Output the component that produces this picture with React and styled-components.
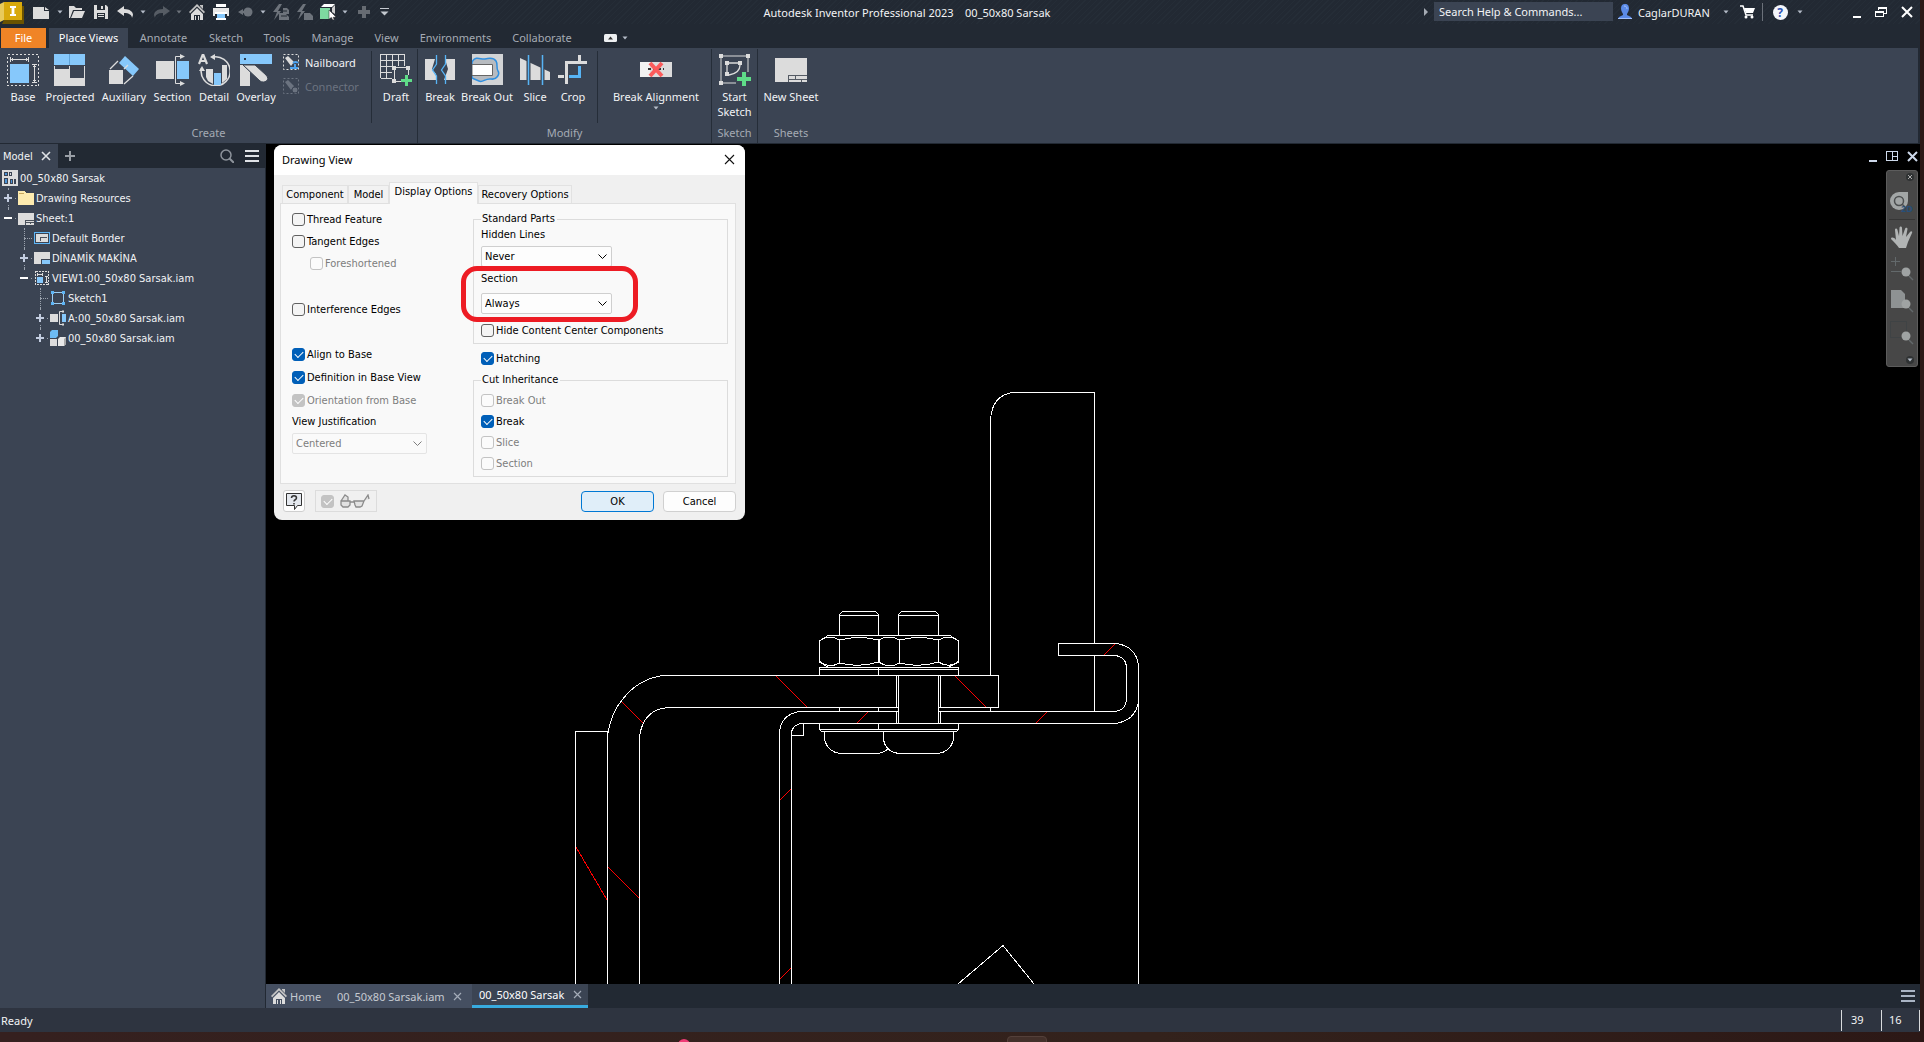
import React from 'react';
import styled, { createGlobalStyle, css } from 'styled-components';

const light = '#dcdcdc';
const blue = '#86c8fb';
const green = '#5fdc88';

const GlobalStyle = createGlobalStyle`
  * {
    box-sizing: border-box;
  }

  html, body, #root {
    height: 100%;
  }

  body {
    margin: 0;
    background: #2a1814;
    font-family: 'Noto Sans', 'Open Sans', sans-serif;
    font-size: 11px;
    color: #f2f3f5;
    overflow: hidden;
  }

  button, input, select {
    font: inherit;
    color: inherit;
  }

  svg {
    display: block;
    flex: none;
  }
`;

/* ---------- icons ---------- */

const Svg = ({ w = 16, h = w, crisp, children }) => (
  <svg width={w} height={h} viewBox={`0 0 ${w} ${h}`} fill="none" shapeRendering={crisp ? 'crispEdges' : undefined} aria-hidden="true">
    {children}
  </svg>
);

const Caret = ({ color = '#b4bcc8' }) => (
  <Svg w={6} h={4}><path d="M0.5 0.5h5L3 3.5z" fill={color} /></Svg>
);

const Cross = ({ size = 10, color = '#a4acb8', width = 1.6 }) => (
  <Svg w={size}><path d={`M1 1L${size - 1} ${size - 1}M${size - 1} 1L1 ${size - 1}`} stroke={color} strokeWidth={width} /></Svg>
);

const Burger = ({ color }) => (
  <Svg w={14} h={12} crisp><path d="M0 1h14M0 6h14M0 11h14" stroke={color} strokeWidth="2" /></Svg>
);

const LogoIcon = () => (
  <Svg w={24} h={24}>
    <path d="M0 4l4-2v18l-4 2z" fill="#e8ca5a" />
    <path d="M4 20h18V6h2v18H2z" fill="#6b5300" />
    <path d="M4 2h18v18H4z" fill="#d8a90c" />
    <path d="M10 6h6v2h-1.6v6H16v2h-6v-2h1.6V8H10z" fill="#fff" />
  </Svg>
);

const NewIcon = () => <Svg><path d="M0 3h11v4h5v8H0zM12 3l4 3h-4z" fill={light} /></Svg>;

const OpenIcon = () => (
  <Svg><path d="M0 2h5l2 2h6v2H4L1 14H0z" fill={light} /><path d="M5 7h11l-3 7H2z" fill={light} /></Svg>
);

const SaveIcon = () => (
  <Svg w={14}>
    <path d="M0 0h12l2 2v12H0z" fill={light} />
    <path d="M3 0h8v5H3zM3 8h8v6H3z" fill="#232a33" />
    <path d="M7 1h2v3H7zM4 9h6v1H4zM4 11h6v1H4z" fill={light} />
  </Svg>
);

const UndoIcon = () => (
  <Svg w={17} h={14}><path d="M0 6l7-5v3c6 0 9 3 9 6l-1 3c0-3-3-5-8-5v3z" fill={light} /></Svg>
);

const RedoIcon = () => (
  <Svg w={17} h={14}><path d="M17 6l-7-5v3c-6 0-9 3-9 6l1 3c0-3 3-5 8-5v3z" fill="#565c64" /></Svg>
);

const HomeIcon = () => (
  <Svg>
    <path d="M8 0l8 8-1.200 1.200L8 2.400 1.200 9.200 0 8zM11 1h3v4l-3-3z" fill="#c4c4c4" />
    <path d="M2 10l6-6 6 6v6h-3v-5H5v5H2z" fill={light} />
    <path d="M6 12h1v4H6zM9 12h1v4H9z" fill={light} />
  </Svg>
);

const PrintIcon = () => (
  <Svg>
    <path d="M3 0h10v3H3z" fill="#fff" />
    <path d="M0 4h16v8h-2V8H2v4H0z" fill="#e8e8e8" />
    <path d="M2 9h12M3 15h10" stroke="#fff" strokeWidth="2" />
    <path d="M4 10h8v4H4z" fill={blue} />
  </Svg>
);

const PointIcon = () => (
  <Svg w={15} h={10}><circle cx="10" cy="5" r="4.5" fill="#6d737b" /><path d="M0 5l5-3v2h3v2H5v2z" fill="#6d737b" /></Svg>
);

const BoltAllIcon = () => (
  <Svg>
    <path d="M6 0L0 8h4l-3 8 7-9H5l4-7z" fill="#6d737b" />
    <path d="M10 4h4l2 2v4h-6zM6 9h6l4 4v3H6z" fill="#6d737b" />
    <path d="M8 12h6M10 7h4" stroke="#232a33" />
  </Svg>
);

const BoltIcon = () => (
  <Svg>
    <path d="M6 0L0 8h4l-3 8 7-9H5l4-7z" fill="#6d737b" />
    <path d="M7 9h6l3 3v4H7z" fill="#6d737b" />
  </Svg>
);

const CubeIcon = () => (
  <Svg>
    <path d="M0 4h10v11H0z" fill="#7ed9a0" />
    <path d="M1 3l3-3h11l-3 3z" fill="#fff" />
    <path d="M12 4l3-3v9l-3-2z" fill="#d0d0d0" />
    <path d="M9 6l7 7-3 .4 1.4 2.2-1.6.4-1.4-2.6L9 15z" fill="#fff" stroke="#222" strokeWidth=".5" />
  </Svg>
);

const PlusIcon = ({ size = 12, color = '#666b72', width = 4 }) => (
  <Svg w={size}><path d={`M${size / 2} 0v${size}M0 ${size / 2}h${size}`} stroke={color} strokeWidth={width} /></Svg>
);

const MoreIcon = () => (
  <Svg w={9} h={8}><path d="M0 .5h9" stroke="#c4c9d0" /><path d="M.5 3.5h8l-4 4z" fill="#c4c9d0" /></Svg>
);

const UserIcon = () => (
  <Svg w={14} h={16}>
    <path d="M7 0c3 0 4 2 4 4.500S9.500 9 9 10v1l4 2 1 2H0l1-2 4-2v-1C4.500 9 3 7 3 4.500S4 0 7 0z" fill="#5b8be8" />
    <path d="M6 2c2 0 3 1 3 3" stroke="#a6c4ff" />
    <path d="M0 14.500h14" stroke="#9fc0ff" />
  </Svg>
);

const CartIcon = () => (
  <Svg w={15} h={14}>
    <path d="M0 1h3l3 9h7" stroke="#fff" strokeWidth="1.500" />
    <path d="M4 3h11l-2 5H6z" fill="#fff" />
    <circle cx="6" cy="12" r="1.500" fill="#fff" /><circle cx="12" cy="12" r="1.500" fill="#fff" />
  </Svg>
);

const BaseIcon = () => (
  <Svg w={32} crisp>
    <path d="M.5.5h31v31H.5z" stroke={light} strokeDasharray="2 2" />
    <path d="M3 10h19v19H3z" fill={blue} />
    <path d="M3 5.5h19M3.500 3v5M21.500 3v5M27.500 10v19M25 10.500h5M25 28.500h5M5.500 4v3M19.500 4v3M26 12.500h3M26 26.500h3" stroke={light} />
  </Svg>
);

const ProjectedIcon = () => (
  <Svg w={32} crisp>
    <path d="M0 0h31v11H0z" fill={blue} />
    <path d="M15.500 0v11" stroke="#5fa2d8" />
    <path d="M.500 12v20M15.500 12v12M30.500 12v12" stroke={light} />
    <path d="M0 15h15v9h16v8H0z" fill={light} />
  </Svg>
);

const AuxiliaryIcon = () => (
  <Svg w={30} h={32}>
    <path d="M0 16h14v14H0z" fill={light} />
    <path d="M16 2l14 13-6 7L10 9z" fill={blue} />
    <path d="M1 15l8-8M15 15l4-4M15 30l9-8" stroke={light} strokeWidth="1.300" />
  </Svg>
);

const SectionIcon = () => (
  <Svg w={33} h={32}>
    <path d="M0 7h18v18H0z" fill={light} />
    <path d="M21 7h12v18H21z" fill={blue} />
    <path d="M25 2.500h-5.500v27H25" stroke={light} />
    <path d="M24 0l5 2.500L24 5zM24 27l5 2.500-5 2.500z" fill={light} />
  </Svg>
);

const DetailIcon = () => (
  <Svg w={32}>
    <path d="M1 10L5 0l4 10M3 7h5" stroke={light} strokeWidth="2.200" />
    <path d="M14 3.200A14.500 14.500 0 1 1 3.500 14" stroke={light} strokeWidth="1.600" />
    <path d="M12 3l5-3v6zM1 17l3-5 3 5z" fill={light} />
    <path d="M8 15h7v15l-5-3-2-4z" fill={light} />
    <path d="M16 19h7v12h-7z" fill={blue} />
    <path d="M24 11h5v14l-5 4z" fill={light} />
  </Svg>
);

const OverlayIcon = () => (
  <Svg w={32}>
    <path d="M0 0h32v10H0z" fill={blue} />
    <path d="M4 4h2v2H4z" fill="#2d3a4c" />
    <path d="M0 11h3l7 7v14H0z" fill={light} />
    <path d="M3 11h12l11 10c5 5-2 9-6 6z" fill={light} stroke="#3b4453" />
  </Svg>
);

const NailboardIcon = ({ dim }) => (
  <Svg>
    <path d="M.500.500h15v15H.500z" stroke={dim ? '#6b7380' : light} strokeDasharray="2 2" />
    <path d="M2 4l3-2 6 6-3 4z" fill={dim ? '#6b7380' : light} />
    {dim
      ? <circle cx="12" cy="12" r="3" fill="#6b7380" stroke="#3b4453" />
      : <path d="M7 14h8M10 9c3-2 4 0 5-1M12 10v4" stroke="#4da3f0" strokeWidth="2" />}
  </Svg>
);

const DraftIcon = () => (
  <Svg w={32} crisp>
    <path d="M.500 24V.500H24V12M.500 24.500H12M6.500 0v24M12.500 0v14M18.500 0v12M0 6.500h24M0 12.500h12M0 18.500h12" stroke={light} />
    <path d="M14.500 13.500h14v14h-14z" stroke={light} />
    <path d="M12 12h4v4h-4zM26 12h4v4h-4zM12 25h4v4h-4z" fill={light} />
    <path d="M21 21h11v11H21z" fill="#3b4453" />
    <path d="M26.500 21v11M21 26.500h11" stroke={green} strokeWidth="3" />
  </Svg>
);

const BreakIcon = () => (
  <Svg w={30} h={32}>
    <path d="M0 5h10l-3 10 4 5v6H0zM20 5h10v21H19l4-11z" fill={light} />
    <path d="M11.500 1v9l-4 6 4 6v8M20.500 1v9l-4 6 4 6v8" stroke="#57b4f5" strokeWidth="1.300" />
  </Svg>
);

const BreakOutIcon = () => (
  <Svg w={31} h={31}>
    <path d="M0 0h31v31H0z" fill="#d2d4d6" />
    <path d="M0 8c4-7 9-2 13-3s9-1 11 2 0 7 2 10-1 9-7 8-8 4-12 2-5-2-7-3z" fill="#b7bbc0" stroke="#2f8fe0" strokeWidth="1.500" />
    <path d="M0 10.500h20.500v11H0z" fill="#fff" stroke="#666" />
  </Svg>
);

const SliceIcon = () => (
  <Svg w={30} h={32}>
    <path d="M0 4l30 14v8H0z" fill={light} />
    <path d="M8.500 1v30M22.500 1v30" stroke="#3b4453" strokeWidth="4" />
    <path d="M8.500 1v30M22.500 1v30" stroke="#57b4f5" strokeWidth="1.500" />
  </Svg>
);

const CropIcon = () => (
  <Svg w={30} h={32} crisp>
    <path d="M0 22h6M8.500 30V9M7 8.500h22M21.500 1v6" stroke={light} strokeWidth="3" />
    <path d="M21.500 12v12M11 22.500h12" stroke="#57b4f5" strokeWidth="3" />
  </Svg>
);

const BreakAlignIcon = () => (
  <Svg w={32}>
    <path d="M0 8h32v15H0z" fill={light} />
    <path d="M0 8h10v15H0z" fill="#f2f2f2" />
    <path d="M8 15h16" stroke="#333" strokeWidth="2" strokeDasharray="3 2" />
    <path d="M10 9l12 13M22 9L10 22" stroke="#fb5b5b" strokeWidth="4" />
  </Svg>
);

const StartSketchIcon = () => (
  <Svg w={32}>
    <path d="M2 2h27v16M2 2v27h15" stroke={light} />
    <path d="M0 0h4v4H0zM27 0h4v4h-4zM0 27h4v4H0zM6 7h4v4H6zM19 7h4v4h-4zM6 18h4v4H6z" fill={light} />
    <path d="M8 18V9h11M21 11c0 6-5 9-11 10" stroke={light} strokeWidth="1.300" />
    <path d="M25 18v14M18 25h14" stroke={green} strokeWidth="4" />
  </Svg>
);

const NewSheetIcon = () => (
  <Svg w={32} crisp>
    <path d="M0 4h32v24H0z" fill={light} />
    <path d="M13 21.500h19M13.500 21v7M13 25.500h19M20.500 22v3M26.500 25v3" stroke="#555b64" />
  </Svg>
);

const RootIcon = () => (
  <Svg crisp>
    <path d="M0 0h16v16H0z" fill={light} />
    <path d="M2.500 2.500h3v3h-3zM2.500 8.500h3v5h-3zM8.500 9.500h2v4h-2zM12.500 9.500h1v4h-1z" fill="#4b93d6" stroke="#3b4453" />
    <path d="M7.500 2.500h2v3h-2z" stroke="#3b4453" />
  </Svg>
);
const FolderIcon = () => <Svg crisp><path d="M0 1h6l2 2h8v12H0z" fill="#fdebaf" /><path d="M1 3.500h5" stroke="#c8a75c" /></Svg>;
const SheetIcon = () => <Svg crisp><path d="M0 3h16v12H0z" fill={light} /><path d="M7 10.500h9M7.500 10v5M7 12.500h9M12.500 12v2" stroke="#4a515c" /></Svg>;
const BorderIcon = () => (
  <Svg crisp><path d="M.500 2.500h15v11H.500z" stroke="#5eb5f5" /><path d="M2 4h12v8H2z" fill={light} /><path d="M6.500 11V7.500H13" stroke="#4a515c" /></Svg>
);
const TitleBlockIcon = () => <Svg crisp><path d="M0 2h16v12H0z" fill={light} /><path d="M7 9h9v5H7z" fill={blue} stroke="#3b4453" /></Svg>;
const ViewIcon = () => (
  <Svg crisp>
    <path d="M1.500 1.500h13v13h-13z" stroke={light} strokeDasharray="2 1" />
    <path d="M3 7h6v6H3z" fill={blue} />
    <path d="M3 4.500h6M3.500 3v3M8.500 3v3M12.500 6v7M11 6.500h3M11 12.500h3" stroke={light} />
  </Svg>
);
const SketchIcon = () => (
  <Svg crisp><path d="M2.500 2.500h11v11h-11z" stroke="#9ccdf2" /><path d="M1 1h3v3H1zM12 1h3v3h-3zM1 12h3v3H1zM12 12h3v3h-3z" fill="#5eb5f5" /></Svg>
);
const SectionSmallIcon = () => (
  <Svg><path d="M0 4h8v8H0z" fill={light} /><path d="M12 4h4v8h-4z" fill={blue} /><path d="M14 1.500H9.500v13H14M13 0v3M13 13v3" stroke={light} /></Svg>
);
const AssemblyIcon = () => (
  <Svg>
    <path d="M0 2l2-2h6v6l-2 2H0z" fill="#6dbcf5" /><path d="M0 9h7v7H0z" fill={light} />
    <path d="M8 9l2-2h6v7l-2 2H8z" fill="#e8e8e8" /><path d="M14 16V9l2-2v7z" fill="#a8a8a8" />
  </Svg>
);
const SearchIcon = () => (
  <Svg w={14}><circle cx="6" cy="6" r="5" stroke="#8d939b" strokeWidth="1.500" /><path d="M9.500 9.500L14 14" stroke="#8d939b" strokeWidth="2" /></Svg>
);
const MinimizeIcon = ({ color = '#fff' }) => <Svg w={8} h={12} crisp><path d="M0 11h8" stroke={color} strokeWidth="2" /></Svg>;
const RestoreIcon = () => (
  <Svg w={12} crisp><path d="M3.500 4V1.500h8v6H9" stroke="#fff" /><path d="M3 2h9M0 5.500h9" stroke="#fff" strokeWidth="2" /><path d="M.500 5.500h8v5h-8z" stroke="#fff" /></Svg>
);
const TileIcon = () => (
  <Svg w={12} h={12} crisp><path d="M.500 1.500h11v9H.500zM6.500 1v10M6 6.500h6" stroke="#cdd8ea" /></Svg>
);
const Chevron = () => <Svg w={9} h={6}><path d="M.500.500l4 4 4-4" stroke="currentColor" /></Svg>;

const WheelIcon = () => (
  <Svg w={24}>
    <path d="M9 1h9v9a9 9 0 1 1-9-9z" fill="#a2a6a6" />
    <circle cx="9" cy="10" r="4.500" stroke="#4c4f50" strokeWidth="1.500" />
    <path d="M12 13l3 3" stroke="#4c4f50" strokeWidth="1.500" />
    <text x="11" y="21" fontSize="9" fontWeight="700" fill="#27507a">2D</text>
  </Svg>
);
const HandIcon = () => (
  <Svg w={22} h={23}>
    <path d="M8 22c-2-3-5-6-8-9 0-2 3-2 5 1L4 4c0-2 2-2 2.500 0L8 10 8.500 2c0-2 2.500-2 2.500 0l.5 8L14 3c.5-2 2.500-1.500 2.500 0L15 11l4-5c1-1.500 3-.500 2 1l-4 9-2 6z" fill="#b1b4b4" />
  </Svg>
);
const Lens = () => (
  <>
    <path d="M19 19l4 4" stroke="#63696b" strokeWidth="1.500" />
    <circle cx="16" cy="15" r="4.500" fill="#9fa3a3" />
  </>
);
const ZoomIcon = () => <Svg w={24}><path d="M5.500 0v9M1 4.500h9M1 14.500h10" stroke="#63696b" /><Lens /></Svg>;
const ZoomPageIcon = () => <Svg w={24}><path d="M1 1h10l4 4v14H1z" fill="#8e9293" /><Lens /></Svg>;
const ZoomWindowIcon = () => <Svg w={24}><path d="M.500.500h16v16H.500z" stroke="#3f4345" /><Lens /></Svg>;

const GlassesIcon = () => (
  <Svg w={30} h={14}>
    <path d="M1 7h9v4l-2 2H3l-2-2zM14 7h10l-2 5-2 1h-4l-1-2zM10 8h4M1 7l4-6 3 2v4M24 7l4-6 1 4" fill="#e2e2e2" stroke="#8b8b8b" strokeWidth="1.300" />
  </Svg>
);
const HelpBubble = () => (
  <Svg w={17} h={17}>
    <path d="M.500.500h15v12h-4l-3 4v-4h-8z" fill="#e4e8ee" stroke="#333" />
    <path d="M5.500 5c0-3 5-3 5 0 0 2-2.500 1.500-2.500 3.500M8 10v1.500" stroke="#333" strokeWidth="1.500" />
  </Svg>
);

/* ---------- window frame ---------- */

const Desktop = styled.div`
  height: 100vh;
  display: flex;
  flex-direction: column;
  background: linear-gradient(90deg, #35201f, #33221c 60%, #2c1816);
`;

const AppWindow = styled.div`
  flex: 1;
  min-height: 0;
  margin-right: 4px;
  display: flex;
  flex-direction: column;
  background: #222933;
`;

const Taskbar = styled.div`
  height: 10px;
  position: relative;
  overflow: hidden;
`;

const TaskDot = styled.span`
  position: absolute;
  left: 678px;
  top: 7px;
  width: 12px;
  height: 12px;
  border-radius: 50%;
  background: #ef3b76;
`;

const TaskApp = styled(TaskDot)`
  left: 1007px;
  top: 4px;
  width: 40px;
  height: 40px;
  border-radius: 4px;
  background: #43302a;
  border: 1px solid #54403a;
`;

const TitleBar = styled.header`
  height: 24px;
  display: flex;
  align-items: center;
  background: repeating-linear-gradient(135deg, #222933 0 3px, #252d37 3px 4px);
`;

const QuickAccess = styled.div`
  width: 390px;
  display: flex;
  align-items: center;
`;

const QuickButton = styled.button`
  width: ${props => props.$w}px;
  height: 22px;
  padding: 0;
  border: 0;
  background: none;
  display: flex;
  align-items: center;
  justify-content: center;
`;

const WindowTitle = styled.h1`
  flex: 1;
  margin: 0;
  font-size: 11px;
  font-weight: 400;
  text-align: center;
  white-space: pre;
`;

const Account = styled.div`
  width: 496px;
  display: flex;
  align-items: center;
  white-space: nowrap;
`;

const HelpSearch = styled.input`
  width: 179px;
  height: 19px;
  margin: 0 5px 2px 6px;
  padding: 0 5px;
  border: 0;
  background: #3b4453;
  outline: none;

  &::placeholder {
    color: #f2f3f5;
    opacity: 1;
  }
`;

const UserButton = styled.button`
  width: 114px;
  padding: 0;
  border: 0;
  background: none;
  display: flex;
  align-items: center;
  gap: 6px;

  svg:last-child {
    margin-left: auto;
    margin-right: 3px;
  }
`;

const Divider = styled.span`
  width: 1px;
  height: 18px;
  background: #6b717a;
`;

const HelpBadge = styled.span`
  width: 15px;
  height: 15px;
  border-radius: 50%;
  background: #f4f6fa;
  color: #2c53b5;
  font-size: 12px;
  font-weight: 700;
  line-height: 15px;
  text-align: center;
`;

const WindowButtons = styled.div`
  margin-left: auto;
  display: flex;
  align-items: center;
  gap: 14px;
  padding-right: 7px;
`;

const IconButton = styled.button`
  padding: 0;
  border: 0;
  background: none;
  display: flex;
  align-items: center;
`;

/* ---------- ribbon ---------- */

const RibbonTabs = styled.nav`
  height: 24px;
  display: flex;
  align-items: flex-end;
  padding-left: 1px;
`;

const RibbonTab = styled.button`
  height: 20px;
  width: ${props => props.$w}px;
  padding: 0;
  border: 0;
  line-height: 20px;
  white-space: nowrap;
  background: none;
  color: #a5abb4;

  ${props => props.$active && css`
    background: #3b4453;
    color: #fff;
  `}

  ${props => props.$file && css`
    background: #f08426;
    color: #fff;
    margin-right: 3px;
  `}
`;

const Collapse = styled.button`
  height: 20px;
  margin-left: 22px;
  padding: 0;
  border: 0;
  background: none;
  display: flex;
  align-items: center;
  gap: 5px;
`;

const Ribbon = styled.section`
  height: 96px;
  display: flex;
  background: #3b4453;
  border-bottom: 1px solid #222933;
  margin-right: 2px;
`;

const Group = styled.div`
  width: ${props => props.$w}px;
  display: flex;
  flex-direction: column;
  border-right: ${props => (props.$last ? '0' : '1px solid #252d38')};
  margin-top: 1px;
`;

const GroupBody = styled.div`
  flex: 1;
  display: flex;
  padding-left: ${props => (props.$center ? 0 : 4)}px;
  justify-content: ${props => (props.$center ? 'center' : 'flex-start')};
`;

const GroupName = styled.div`
  height: 19px;
  line-height: 17px;
  text-align: center;
  color: #a5abb4;
`;

const Tool = styled.button`
  flex: none;
  width: ${props => props.$w || 38}px;
  padding: 5px 0 0;
  border: 0;
  background: none;
  display: flex;
  flex-direction: column;
  align-items: center;
  line-height: 15px;
  white-space: nowrap;

  > svg {
    margin-top: 2px;
  }
`;

const ToolIcon = styled.span`
  height: 32px;
  margin-bottom: 3px;
`;

const Small = styled.div`
  width: 87px;
  padding-top: 4px;
`;

const SmallTool = styled.button`
  height: 24px;
  padding: 0 0 6px 4px;
  border: 0;
  background: none;
  display: flex;
  align-items: center;
  gap: 6px;

  &:disabled {
    color: #6b7380;
  }
`;

const Rule = styled.span`
  width: 1px;
  height: 72px;
  margin: 2px 5px 0;
  background: #252d38;
`;

/* ---------- model browser ---------- */

const Workspace = styled.div`
  flex: 1;
  min-height: 0;
  display: flex;
`;

const Browser = styled.aside`
  width: 266px;
  display: flex;
  flex-direction: column;
  background: #3b4453;
  border-right: 1px solid #222933;
  font-family: 'DejaVu Sans Condensed', 'Noto Sans', sans-serif;
  font-size: 11px;
`;

const BrowserHead = styled.div`
  height: 24px;
  display: flex;
  align-items: center;
  background: #222933;
`;

const BrowserTab = styled.div`
  width: 58px;
  height: 24px;
  padding: 0 7px 0 3px;
  display: flex;
  align-items: center;
  justify-content: space-between;
  background: #3b4453;
`;

const BrowserTools = styled.div`
  margin-left: auto;
  padding-right: 6px;
  display: flex;
  align-items: center;
  gap: 11px;
`;

const Tree = styled.ul`
  margin: 0;
  padding: 0;
  list-style: none;
`;

const TreeRow = styled.li`
  height: 20px;
  padding-left: ${props => props.$indent}px;
  display: flex;
  align-items: center;
  gap: 2px;
  white-space: nowrap;
`;

const Branch = styled.span`
  position: relative;
  width: 16px;
  height: 20px;
  display: flex;
  align-items: center;
  justify-content: center;

  &::before {
    content: '';
    position: absolute;
    left: 8px;
    top: 0;
    height: ${props => (props.$end ? 10 : 20)}px;
    border-left: 1px dotted #9aa2ad;
  }

  &::after {
    content: '';
    position: absolute;
    left: 8px;
    top: 10px;
    width: 8px;
    border-top: 1px dotted #9aa2ad;
  }
`;

const Toggle = styled.button`
  position: relative;
  z-index: 1;
  width: 12px;
  height: 14px;
  padding: 0;
  border: 0;
  background: #3b4453;
  display: flex;
  align-items: center;
  justify-content: center;
`;

/* ---------- drawing area ---------- */

const Documents = styled.main`
  flex: 1;
  min-width: 0;
  display: flex;
  flex-direction: column;
`;

const Canvas = styled.div`
  position: relative;
  flex: 1;
  min-height: 0;
  background: #000;
  overflow: hidden;
`;

const Sheet = styled.svg`
  width: 100%;
  height: 100%;
`;

const SheetButtons = styled.div`
  position: absolute;
  top: 6px;
  right: 2px;
  display: flex;
  align-items: center;
  gap: 9px;
`;

const NavBar = styled.div`
  position: absolute;
  top: 26px;
  right: 2px;
  width: 32px;
  padding: 2px 3px;
  border: 1px solid #5c5c5c;
  border-radius: 3px;
  background: #474747;
  display: flex;
  flex-direction: column;
  align-items: center;
`;

const NavCap = styled.button`
  align-self: flex-end;
  width: 8px;
  height: 8px;
  margin: ${props => (props.$end ? '7px 0 0' : '0 0 6px')};
  padding: 0;
  border: 0;
  border-radius: 50%;
  background: #2f3233;
  display: flex;
  align-items: center;
  justify-content: center;
`;

const NavTool = styled(IconButton)`
  height: 32px;
`;

const NavRule = styled.hr`
  width: 26px;
  margin: 0 0 1px;
  border: 0;
  border-top: 1px solid #363636;
`;

const DocTabs = styled.div`
  height: 24px;
  display: flex;
  align-items: center;
  background: #222933;
`;

const DocTab = styled.div`
  height: 24px;
  width: ${props => props.$w}px;
  padding: 0 10px 0 8px;
  display: flex;
  align-items: center;
  gap: 3px;
  white-space: nowrap;
  color: #c6cad1;
  background: #454f61;

  ${props => props.$home && css`
    padding: 0 0 0 5px;
  `}

  ${props => props.$active && css`
    padding: 0 6px 0 7px;
    color: #fff;
    background: #3b4453;
    border-bottom: 3px solid #38abdf;
  `}

  button {
    margin-left: auto;
  }
`;

const DocMenu = styled(IconButton)`
  margin-left: auto;
  margin-right: 5px;
`;

const StatusBar = styled.footer`
  height: 24px;
  display: flex;
  align-items: center;
  padding-left: 1px;
  background: #2e3440;
`;

const StatusText = styled.span`
  flex: 1;
`;

const StatusCell = styled.span`
  width: ${props => props.$w}px;
  height: 21px;
  padding-left: ${props => props.$pad}px;
  line-height: 20px;
  border-left: 1px solid #d9dbde;
`;

/* ---------- dialog ---------- */

const Dialog = styled.section`
  position: absolute;
  left: 8px;
  top: 1px;
  width: 471px;
  height: 375px;
  border-radius: 8px;
  overflow: hidden;
  background: #f0f0f0;
  color: #000;
  font-family: 'DejaVu Sans Condensed', 'Noto Sans', sans-serif;
  font-size: 11px;
`;

const DialogHead = styled.div`
  height: 30px;
  padding: 0 10px 2px 8px;
  display: flex;
  align-items: center;
  justify-content: space-between;
  background: #fff;
  font-family: 'Noto Sans', 'Open Sans', sans-serif;
`;

const DialogBody = styled.div`
  padding: 7px 9px 0 6px;
`;

const DialogTabs = styled.div`
  height: 21px;
  display: flex;
  align-items: flex-end;
  padding-left: 2px;
`;

const DialogTab = styled.button`
  position: relative;
  width: ${props => props.$w}px;
  height: ${props => (props.$active ? 22 : 18)}px;
  margin-bottom: ${props => (props.$active ? -1 : 0)}px;
  padding: 0 0 ${props => (props.$active ? 5 : 0)}px;
  border: 1px solid #e2e2e2;
  border-bottom: 0;
  background: ${props => (props.$active ? '#f9f9f9' : '#f2f2f2')};
  white-space: nowrap;
`;

const Page = styled.div`
  height: 281px;
  display: grid;
  grid-template-columns: 181px 255px;
  padding: 0 7px 0 11px;
  border: 1px solid #e0e0e0;
  background: #f9f9f9;
`;

const Column = styled.div`
  padding-top: ${props => props.$top}px;
`;

const CheckRow = styled.label`
  height: ${props => props.$h || 22}px;
  margin-left: ${props => props.$indent || 0}px;
  margin-top: ${props => props.$gap || 0}px;
  display: flex;
  align-items: center;
  gap: 2px;
  white-space: nowrap;
  color: ${props => (props.$off ? '#7d7d7d' : '#000')};
`;

const Box = styled.input.attrs({ type: 'checkbox' })`
  appearance: none;
  position: relative;
  width: 13px;
  height: 13px;
  margin: 0;
  flex: none;
  border: 1px solid #616161;
  border-radius: 3px;
  background: #f4f4f4;

  &:disabled {
    border-color: #c3c3c3;
    background: #fbfbfb;
  }

  &:checked {
    border-color: #005fb8;
    background: #005fb8;
  }

  &:checked:disabled {
    border-color: #c3c3c3;
    background: #c3c3c3;
  }

  &:checked::after {
    content: '';
    position: absolute;
    left: 2px;
    top: 2px;
    width: 7px;
    height: 4px;
    border: solid #fff;
    border-width: 0 0 1px 1px;
    transform: rotate(-45deg);
  }
`;

const FieldLabel = styled.label`
  display: block;
  height: 16px;
  line-height: 16px;
  margin-top: ${props => props.$top || 0}px;
  margin-bottom: ${props => props.$gap}px;
`;

const SelectWrap = styled.div`
  position: relative;
  width: ${props => props.$w}px;
  height: 21px;
  color: ${props => (props.$off ? '#7d7d7d' : '#000')};

  svg {
    position: absolute;
    right: 5px;
    top: 8px;
    pointer-events: none;
  }
`;

const Select = styled.select`
  appearance: none;
  width: 100%;
  height: 21px;
  padding: 0 3px;
  border: 1px solid #cfcfcf;
  border-radius: 2px;
  background: #fdfdfd;

  &:disabled {
    opacity: 1;
    border-color: #e4e4e4;
    background: #fafafa;
  }
`;

const Frame = styled.fieldset`
  margin: 0;
  min-width: 0;
  padding: ${props => props.$top || 0}px 0 2px 7px;
  border: 1px solid #dcdcdc;

  legend {
    height: 16px;
    line-height: 16px;
    padding: 0 2px 0 1px;
  }
`;

const DialogFoot = styled.div`
  height: 34px;
  display: flex;
  align-items: center;
  padding-left: 3px;
`;

const HelpButton = styled.button`
  width: 22px;
  height: 22px;
  margin-right: 10px;
  padding: 0 0 0 2px;
  border: 1px solid #cfcfcf;
  border-radius: 3px;
  background: #fdfdfd;
`;

const Preview = styled.label`
  width: 62px;
  height: 22px;
  padding-left: 5px;
  margin-right: auto;
  border: 1px solid #dcdcdc;
  display: flex;
  align-items: center;
  gap: 6px;
`;

const PushButton = styled.button`
  width: 73px;
  height: 21px;
  margin-left: 9px;
  padding: 0;
  border: 1px solid ${props => (props.$primary ? '#0078d4' : '#d0d0d0')};
  border-radius: 4px;
  background: ${props => (props.$primary ? '#e0eef9' : '#fdfdfd')};
`;

const Callout = styled.div`
  position: absolute;
  left: 195px;
  top: 122px;
  width: 177px;
  height: 56px;
  border: 5px solid #ed1c24;
  border-radius: 16px;
  pointer-events: none;
`;

/* ---------- parts ---------- */

const tabs = [
  ['Annotate', 71], ['Sketch', 54], ['Tools', 48], ['Manage', 63],
  ['View', 45], ['Environments', 93], ['Collaborate', 80],
];

const tree = [
  { level: 1, label: 'Drawing Resources', icon: <FolderIcon />, mark: 'plus' },
  { level: 1, label: 'Sheet:1', icon: <SheetIcon />, mark: 'minus', end: true },
  { level: 2, label: 'Default Border', icon: <BorderIcon /> },
  { level: 2, label: 'DİNAMİK MAKİNA', icon: <TitleBlockIcon />, mark: 'plus' },
  { level: 2, label: 'VIEW1:00_50x80 Sarsak.iam', icon: <ViewIcon />, mark: 'minus', end: true },
  { level: 3, label: 'Sketch1', icon: <SketchIcon /> },
  { level: 3, label: 'A:00_50x80 Sarsak.iam', icon: <SectionSmallIcon />, mark: 'plus' },
  { level: 3, label: '00_50x80 Sarsak.iam', icon: <AssemblyIcon />, mark: 'plus', end: true },
];

const RibbonTool = ({ icon, label, w, children }) => (
  <Tool $w={w}>
    <ToolIcon>{icon}</ToolIcon>
    {label}
    {children}
  </Tool>
);

const Check = ({ label, checked, off, indent, gap, h }) => (
  <CheckRow $off={off} $indent={indent} $gap={gap} $h={h}>
    <Box defaultChecked={checked} disabled={off} />
    {label}
  </CheckRow>
);

const Choice = ({ id, value, w, off }) => (
  <SelectWrap $w={w} $off={off}>
    <Select id={id} disabled={off} defaultValue={value}>
      <option>{value}</option>
    </Select>
    <Chevron />
  </SelectWrap>
);

const Drawing = () => (
  <Sheet aria-label="Section view">
    <g transform="translate(-266 -144)" fill="none" stroke="#fff" shapeRendering="crispEdges">
      {/* upright plate */}
      <path d="M990.500 675V420Q992 395 1013 392.500H1094.500V643M1094.500 656V711M990.500 708V711" />
      {/* hooked profile */}
      <path d="M1117 643.500H1058.500V655.500H1115Q1126.500 657 1126.500 668V698Q1126.500 710 1115 711.500H938.500" />
      <path d="M1117 643.500Q1136 647 1138.500 665V984M1138.500 702Q1135 721 1115 723.500H801Q793 725 791.500 732V984" />
      <path d="M779.500 984V731Q782 714 800 711.500H898.500M803.500 723V735.500H792" />
      {/* bent arm */}
      <path d="M898.500 707.500H669Q643 709 639.500 737V984M607.500 984V735Q611 713 622 700Q638 679 663 675.500H998.500V707.500H938.500" />
      <path d="M607.500 731.500H575.500V984" />
      {/* bolt shafts */}
      <path d="M896.500 675V707M896.500 711V723M898.500 675V723M938.500 675V723M940.500 675V707M940.500 711V723M839.500 708V711M878.500 708V711" />
      <path d="M839.500 635V614.500L842.500 611.500H875.500L878.500 614.500V635M839.500 615.500H878.500" />
      <path d="M898.500 635V614.500L901.500 611.500H935.500L938.500 614.500V635M898.500 615.500H938.500" />
      {/* nuts */}
      <path d="M819.500 641L828 635.500H950L958.500 641V662L949 667M819.500 641V662L828 667" />
      <path d="M839.500 640V662M878.500 640V662M879.500 640V662M899.500 640V662M938.500 640V662" />
      <path d="M819.500 641Q829 634 839.500 640Q859 635 878.500 640Q889 634 899.500 640Q919 635 938.500 640Q949 634 958.500 641" />
      <path d="M819.500 661Q829 669 839.500 663Q859 668 878.500 662Q889 669 899.500 663Q919 668 938.500 662Q949 669 958.500 661" />
      {/* washers */}
      <path d="M819.500 675V667.500H958.500V675M819.500 669.500H958.500M878.500 667V675" />
      <path d="M819.500 723V729.500L821.500 731.500H956.500L958.500 729.500V723M820 729.500H958M878.500 723V729" />
      {/* bolt heads */}
      <path d="M824.500 731V740Q828 752 840 753.500H878Q884 752.500 889 748.500" />
      <path d="M883.500 731V740Q886 752 899 753.500H938Q950 752 953.500 740V731" />
      <path d="M958 984L1003 945.500L1034 984" />
      {/* hatching */}
      <path
        stroke="#f00"
        d="M776 676L807 707M622 702L643 723M857 723L868 712M955 676L986 707M1036 723L1047 712M1104 655L1115 644M780 800L791 789M780 979L791 968M576 847L607 900M608 867L639 898"
      />
    </g>
  </Sheet>
);

const DrawingViewDialog = () => (
  <Dialog role="dialog" aria-label="Drawing View">
    <DialogHead>
      Drawing View
      <IconButton aria-label="Close"><Cross size={11} color="#111" width={1.1} /></IconButton>
    </DialogHead>
    <DialogBody>
      <DialogTabs>
        <DialogTab $w={66}>Component</DialogTab>
        <DialogTab $w={41}>Model</DialogTab>
        <DialogTab $w={89} $active>Display Options</DialogTab>
        <DialogTab $w={94}>Recovery Options</DialogTab>
      </DialogTabs>
      <Page>
        <Column $top={4}>
          <Check label="Thread Feature" />
          <Check label="Tangent Edges" />
          <Check label="Foreshortened" indent={18} off />
          <Check label="Interference Edges" gap={24} />
          <Check label="Align to Base" gap={23} checked />
          <Check label="Definition in Base View" gap={1} checked />
          <Check label="Orientation from Base" gap={1} checked off />
          <FieldLabel htmlFor="justify" $top={3} $gap={3}>View Justification</FieldLabel>
          <Choice id="justify" value="Centered" w={135} off />
        </Column>
        <Column $top={7}>
          <Frame>
            <legend>Standard Parts</legend>
            <FieldLabel htmlFor="hidden" $gap={3}>Hidden Lines</FieldLabel>
            <Choice id="hidden" value="Never" w={131} />
            <FieldLabel htmlFor="section" $top={4} $gap={6}>Section</FieldLabel>
            <Choice id="section" value="Always" w={131} />
            <Check label="Hide Content Center Components" gap={5} />
          </Frame>
          <Check label="Hatching" indent={8} h={28} checked />
          <Frame $top={2}>
            <legend>Cut Inheritance</legend>
            <Check label="Break Out" h={21} off />
            <Check label="Break" h={21} checked />
            <Check label="Slice" h={21} off />
            <Check label="Section" h={21} off />
          </Frame>
        </Column>
      </Page>
      <DialogFoot>
        <HelpButton aria-label="Help"><HelpBubble /></HelpButton>
        <Preview aria-label="Preview">
          <Box defaultChecked disabled />
          <GlassesIcon />
        </Preview>
        <PushButton $primary>OK</PushButton>
        <PushButton>Cancel</PushButton>
      </DialogFoot>
    </DialogBody>
  </Dialog>
);

const App = () => (
  <Desktop>
    <GlobalStyle />
    <AppWindow>
      <TitleBar>
        <QuickAccess>
          <QuickButton $w={24}><LogoIcon /></QuickButton>
          <QuickButton $w={34}><NewIcon /></QuickButton>
          <QuickButton $w={4}><Caret /></QuickButton>
          <QuickButton $w={30}><OpenIcon /></QuickButton>
          <QuickButton $w={18}><SaveIcon /></QuickButton>
          <QuickButton $w={30}><UndoIcon /></QuickButton>
          <QuickButton $w={6}><Caret /></QuickButton>
          <QuickButton $w={30}><RedoIcon /></QuickButton>
          <QuickButton $w={6}><Caret color="#6d737b" /></QuickButton>
          <QuickButton $w={30}><HomeIcon /></QuickButton>
          <QuickButton $w={18}><PrintIcon /></QuickButton>
          <QuickButton $w={30}><PointIcon /></QuickButton>
          <QuickButton $w={6}><Caret /></QuickButton>
          <QuickButton $w={30}><BoltAllIcon /></QuickButton>
          <QuickButton $w={18}><BoltIcon /></QuickButton>
          <QuickButton $w={28}><CubeIcon /></QuickButton>
          <QuickButton $w={6}><Caret /></QuickButton>
          <QuickButton $w={32}><PlusIcon /></QuickButton>
          <QuickButton $w={9}><MoreIcon /></QuickButton>
        </QuickAccess>
        <WindowTitle>{'Autodesk Inventor Professional 2023    00_50x80 Sarsak'}</WindowTitle>
        <Account>
          <Svg w={4} h={8}><path d="M0 0l4 4-4 4z" fill="#a5abb4" /></Svg>
          <HelpSearch placeholder="Search Help & Commands..." aria-label="Search Help & Commands" />
          <UserButton><UserIcon />CaglarDURAN<Caret /></UserButton>
          <QuickButton $w={30}><CartIcon /></QuickButton>
          <Divider />
          <QuickButton $w={34}><HelpBadge>?</HelpBadge></QuickButton>
          <Caret />
          <WindowButtons>
            <IconButton aria-label="Minimize"><MinimizeIcon /></IconButton>
            <IconButton aria-label="Restore"><RestoreIcon /></IconButton>
            <IconButton aria-label="Close"><Cross size={12} color="#fff" width={2} /></IconButton>
          </WindowButtons>
        </Account>
      </TitleBar>

      <RibbonTabs>
        <RibbonTab $w={45} $file>File</RibbonTab>
        <RibbonTab $w={79} $active>Place Views</RibbonTab>
        {tabs.map(([name, w]) => <RibbonTab key={name} $w={w}>{name}</RibbonTab>)}
        <Collapse aria-label="Minimize ribbon">
          <Svg w={13} h={8}><rect width="13" height="8" rx="1.500" fill="#eef0f2" /><path d="M4 5.500h5L6.500 2.500z" fill="#333" /></Svg>
          <Caret />
        </Collapse>
      </RibbonTabs>

      <Ribbon>
        <Group $w={418}>
          <GroupBody>
            <RibbonTool icon={<BaseIcon />} label="Base" />
            <RibbonTool icon={<ProjectedIcon />} label="Projected" w={56} />
            <RibbonTool icon={<AuxiliaryIcon />} label="Auxiliary" w={52} />
            <RibbonTool icon={<SectionIcon />} label="Section" w={45} />
            <RibbonTool icon={<DetailIcon />} label="Detail" />
            <RibbonTool icon={<OverlayIcon />} label="Overlay" w={46} />
            <Small>
              <SmallTool><NailboardIcon />Nailboard</SmallTool>
              <SmallTool disabled><NailboardIcon dim />Connector</SmallTool>
            </Small>
            <Rule />
            <RibbonTool icon={<DraftIcon />} label="Draft" />
          </GroupBody>
          <GroupName>Create</GroupName>
        </Group>
        <Group $w={294}>
          <GroupBody>
            <RibbonTool icon={<BreakIcon />} label="Break" w={36} />
            <RibbonTool icon={<BreakOutIcon />} label="Break Out" w={58} />
            <RibbonTool icon={<SliceIcon />} label="Slice" />
            <RibbonTool icon={<CropIcon />} label="Crop" />
            <Rule />
            <RibbonTool icon={<BreakAlignIcon />} label="Break Alignment" w={106}>
              <Caret />
            </RibbonTool>
          </GroupBody>
          <GroupName>Modify</GroupName>
        </Group>
        <Group $w={46}>
          <GroupBody $center>
            <RibbonTool icon={<StartSketchIcon />} label="Start">
              <span>Sketch</span>
            </RibbonTool>
          </GroupBody>
          <GroupName>Sketch</GroupName>
        </Group>
        <Group $w={66} $last>
          <GroupBody $center>
            <RibbonTool icon={<NewSheetIcon />} label="New Sheet" w={58} />
          </GroupBody>
          <GroupName>Sheets</GroupName>
        </Group>
      </Ribbon>

      <Workspace>
        <Browser>
          <BrowserHead>
            <BrowserTab>
              Model
              <IconButton aria-label="Close Model"><Cross color="#dfe2e6" /></IconButton>
            </BrowserTab>
            <QuickButton $w={24}><PlusIcon size={10} color="#9a9fa6" width={2} /></QuickButton>
            <BrowserTools>
              <IconButton aria-label="Search"><SearchIcon /></IconButton>
              <IconButton aria-label="Menu"><Burger color="#dfe2e6" /></IconButton>
            </BrowserTools>
          </BrowserHead>
          <Tree>
            <TreeRow $indent={2}><RootIcon />00_50x80 Sarsak</TreeRow>
            {tree.map(node => (
              <TreeRow key={node.label} $indent={(node.level - 1) * 16}>
                <Branch $end={node.end}>
                  {node.mark && (
                    <Toggle aria-label={node.label}>
                      {node.mark === 'plus'
                        ? <PlusIcon size={8} color="#c3cde0" width={2} />
                        : <Svg w={8} h={2}><path d="M0 1h8" stroke="#fff" strokeWidth="2" /></Svg>}
                    </Toggle>
                  )}
                </Branch>
                {node.icon}
                {node.label}
              </TreeRow>
            ))}
          </Tree>
        </Browser>

        <Documents>
          <Canvas>
            <Drawing />
            <SheetButtons>
              <IconButton aria-label="Minimize sheet"><MinimizeIcon color="#cdd8ea" /></IconButton>
              <IconButton aria-label="Tile"><TileIcon /></IconButton>
              <IconButton aria-label="Close sheet"><Cross size={11} color="#cdd8ea" width={2} /></IconButton>
            </SheetButtons>
            <NavBar>
              <NavCap aria-label="Close bar"><Cross size={6} color="#aaa" width={1} /></NavCap>
              <NavTool aria-label="Wheel"><WheelIcon /></NavTool>
              <NavRule />
              <NavTool aria-label="Pan"><HandIcon /></NavTool>
              <NavTool aria-label="Zoom"><ZoomIcon /></NavTool>
              <NavTool aria-label="Zoom all"><ZoomPageIcon /></NavTool>
              <NavTool aria-label="Zoom window"><ZoomWindowIcon /></NavTool>
              <NavCap $end aria-label="Options"><Caret /></NavCap>
            </NavBar>
            <DrawingViewDialog />
            <Callout />
          </Canvas>
          <DocTabs>
            <DocTab $w={63} $home><HomeIcon />Home</DocTab>
            <DocTab $w={143}>
              00_50x80 Sarsak.iam
              <IconButton aria-label="Close document"><Cross size={9} width={1.2} /></IconButton>
            </DocTab>
            <DocTab $w={116} $active>
              00_50x80 Sarsak
              <IconButton aria-label="Close document"><Cross size={9} width={1.2} /></IconButton>
            </DocTab>
            <DocMenu aria-label="Documents"><Burger color="#a9b4c4" /></DocMenu>
          </DocTabs>
        </Documents>
      </Workspace>

      <StatusBar>
        <StatusText>Ready</StatusText>
        <StatusCell $w={40} $pad={9}>39</StatusCell>
        <StatusCell $w={38} $pad={7}>16</StatusCell>
        <StatusCell $w={1} $pad={0} />
      </StatusBar>
    </AppWindow>
    <Taskbar>
      <TaskDot />
      <TaskApp />
    </Taskbar>
  </Desktop>
);

export default App;
